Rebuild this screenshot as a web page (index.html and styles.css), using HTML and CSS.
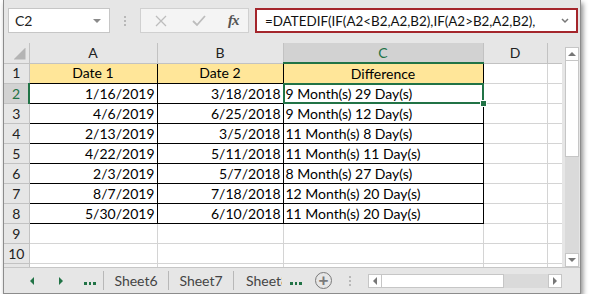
FILE: index.html
```html
<!DOCTYPE html>
<html>
<head>
<meta charset="utf-8">
<link rel="stylesheet" href="styles.css">
</head>
<body>
<div class="window">
  <div class="fbar">
    <div class="namebox"><span class="nb-text">C2</span><span class="nb-arrow"></span></div>
    <div class="vdots"><i></i><i></i><i></i></div>
    <div class="fbtns">
      <svg class="ic-x" width="12" height="12" viewBox="0 0 12 12"><path d="M1 1 L11 11 M11 1 L1 11" stroke="#bdbdbd" stroke-width="1.3" fill="none"/></svg>
      <svg class="ic-ok" width="14" height="12" viewBox="0 0 14 12"><path d="M1 6 L5 10 L13 1" stroke="#bdbdbd" stroke-width="1.8" fill="none"/></svg>
      <span class="fx">fx</span>
    </div>
    <div class="formula"><span class="f-text">=DATEDIF(IF(A2&lt;B2,A2,B2),IF(A2&gt;B2,A2,B2),</span><svg class="chev" width="8" height="6" viewBox="0 0 8 6"><path d="M1 1 L4 4 L7 1" stroke="#777" stroke-width="1.5" fill="none"/></svg></div>
  </div>
  <div class="sheet">
    <div class="gridwrap">
      <table class="grid">
        <colgroup><col class="c-rh"><col class="c-a"><col class="c-b"><col class="c-c"><col class="c-d"><col class="c-e"></colgroup>
        <tr class="hdr"><th class="corner"><span class="tri"></span></th><th>A</th><th>B</th><th class="hsel">C</th><th>D</th><th></th></tr>
        <tr><th class="rh">1</th><td class="d y ctr">Date 1</td><td class="d y ctr">Date 2</td><td class="d y ctr">Difference</td><td></td><td></td></tr>
        <tr><th class="rh rsel">2</th><td class="d r">1/16/2019</td><td class="d r">3/18/2018</td><td class="d sel">9 Month(s) 29 Day(s)<span class="handle"></span></td><td></td><td></td></tr>
        <tr><th class="rh">3</th><td class="d r">4/6/2019</td><td class="d r">6/25/2018</td><td class="d">9 Month(s) 12 Day(s)</td><td></td><td></td></tr>
        <tr><th class="rh">4</th><td class="d r">2/13/2019</td><td class="d r">3/5/2018</td><td class="d">11 Month(s) 8 Day(s)</td><td></td><td></td></tr>
        <tr><th class="rh">5</th><td class="d r">4/22/2019</td><td class="d r">5/11/2018</td><td class="d">11 Month(s) 11 Day(s)</td><td></td><td></td></tr>
        <tr><th class="rh">6</th><td class="d r">2/3/2019</td><td class="d r">5/7/2018</td><td class="d">8 Month(s) 27 Day(s)</td><td></td><td></td></tr>
        <tr><th class="rh">7</th><td class="d r">8/7/2019</td><td class="d r">7/18/2018</td><td class="d">12 Month(s) 20 Day(s)</td><td></td><td></td></tr>
        <tr><th class="rh">8</th><td class="d r">5/30/2019</td><td class="d r">6/10/2018</td><td class="d">11 Month(s) 20 Day(s)</td><td></td><td></td></tr>
        <tr><th class="rh">9</th><td></td><td></td><td></td><td></td><td></td></tr>
        <tr><th class="rh">10</th><td></td><td></td><td></td><td></td><td></td></tr>
        <tr><th class="rh"></th><td></td><td></td><td></td><td></td><td></td></tr>
      </table>
    </div>
    <div class="vscroll">
      <div class="sbtn up"><span class="t-up"></span></div>
      <div class="vthumb"></div>
      <div class="vtrack"></div>
      <div class="sbtn down"><span class="t-down"></span></div>
    </div>
  </div>
  <div class="tabbar">
    <div class="navgrp">
      <span class="nav-l"></span>
      <span class="nav-r"></span>
      <span class="gdots first"><i></i><i></i><i></i></span>
    </div>
    <div class="tabs">
      <span class="tab">Sheet6</span>
      <span class="tab">Sheet7</span>
      <span class="tab cut">Sheet8</span>
    </div>
    <div class="tail">
      <span class="gdots second"><i></i><i></i><i></i></span>
      <span class="plus">+</span>
      <span class="vdots small"><i></i><i></i><i></i></span>
    </div>
    <div class="hscroll">
      <div class="sbtn hl"><span class="t-left"></span></div>
      <div class="hthumb"></div>
      <div class="htrack"></div>
      <div class="sbtn hr"><span class="t-right"></span></div>
    </div>
  </div>
</div>
</body>
</html>
```

FILE: styles.css
```css
html, body { margin: 0; padding: 0; background: #ffffff; }
body { font-family: Lato, "Liberation Sans", sans-serif; }
.window {
  margin-left: 3px;
  width: 576px;
  height: 293px;
  background: #e6e6e6;
  border-left: 1px solid #8c8c8c;
  border-right: 1px solid #8c8c8c;
  border-bottom: 1px solid #8c8c8c;
  box-shadow: 2px 3px 5px rgba(0,0,0,0.45);
  display: flex;
  flex-direction: column;
}
.fbar {
  height: 43px;
  box-sizing: border-box;
  padding: 8px 1px 0 4px;
  display: flex;
  align-items: flex-start;
  flex: none;
}
.namebox {
  width: 102px; height: 25px; box-sizing: border-box;
  background: #fff; border: 1px solid #c6c6c6;
  display: flex; align-items: center; justify-content: space-between;
  padding: 0 8px 0 6px;
}
.nb-text { font-size: 14px; color: #222; }
.nb-arrow { width: 0; height: 0; border-left: 4px solid transparent; border-right: 4px solid transparent; border-top: 4px solid #8a8a8a; margin-top: 1px; }
.vdots { width: 30px; height: 25px; display: flex; flex-direction: column; align-items: center; justify-content: center; gap: 2px; flex: none; }
.vdots i { display: block; width: 2px; height: 2px; background: #b8b8b8; }
.fbtns {
  width: 109px; height: 25px; box-sizing: border-box;
  background: #f4f4f4; border: 1px solid #d0d0d0;
  display: flex; align-items: center; padding: 0 0 0 14px;
}
.ic-x { margin-right: 25px; }
.ic-ok { margin-right: 22px; }
.fx { font-family: "Liberation Serif", serif; font-style: italic; font-size: 15px; color: #555; font-weight: bold; letter-spacing: -1px; }
.formula {
  margin-left: 6px;
  width: 323px; height: 25px; box-sizing: border-box;
  background: #fff; border: 2px solid #a4262c;
  display: flex; align-items: center; justify-content: space-between;
  padding: 0 7px 0 8px;
}
.f-text { font-size: 13.4px; color: #111; white-space: nowrap; }
.sheet { height: 224px; display: flex; flex: none; overflow: hidden; }
.gridwrap { width: 558px; height: 224px; overflow: hidden; background: #fff; flex: none; }
.grid { border-collapse: collapse; table-layout: fixed; width: 607px; font-size: 14px; }
.c-rh { width: 25px; }
.c-a { width: 128px; }
.c-b { width: 126px; }
.c-c { width: 200px; }
.c-d { width: 64px; }
.c-e { width: 64px; }
.grid tr { height: 20px; }
.grid th, .grid td { height: 19px; padding: 0 2px; border: 1px solid #d4d4d4; white-space: nowrap; overflow: hidden; line-height: 18px; text-align: left; }
.grid th { background: #e6e6e6; font-weight: normal; color: #222; border-color: #c2c2c2; text-align: center; }
.hdr th { border-top: none; }
.grid tr > :first-child { border-left: none; }
.corner { position: relative; }
.tri { position: absolute; right: 3px; bottom: 3px; width: 12px; height: 12px; background: #b4b4b4; clip-path: polygon(100% 0, 100% 100%, 0 100%); }
.hsel { background: #d2d2d2 !important; color: #217346 !important; border-bottom: 2px solid #217346 !important; }
.rsel { background: #d2d2d2 !important; color: #217346 !important; border-right: 2px solid #217346 !important; }
.d { border: 1px solid #000 !important; color: #000; }
.y { background: #ffe699; }
.grid td.r { text-align: right; }
.grid td.ctr { text-align: center; }
.sel { position: relative; overflow: visible !important; }
.sel::before { content: ""; position: absolute; left: -1px; top: -1px; right: -1px; bottom: -1px; border: 2px solid #217346; }
.handle { position: absolute; right: -4px; bottom: -4px; width: 5px; height: 5px; background: #217346; border: 1px solid #fff; z-index: 2; }
.vscroll { width: 18px; height: 224px; display: flex; flex-direction: column; padding: 4px 0 0 3px; box-sizing: border-box; flex: none; }
.sbtn { width: 14px; height: 14px; box-sizing: border-box; background: #fff; border: 1px solid #c6c6c6; display: flex; align-items: center; justify-content: center; flex: none; }
.t-up { width: 0; height: 0; border-left: 4px solid transparent; border-right: 4px solid transparent; border-bottom: 4px solid #777; }
.t-down { width: 0; height: 0; border-left: 4px solid transparent; border-right: 4px solid transparent; border-top: 4px solid #777; }
.t-left { width: 0; height: 0; border-top: 4px solid transparent; border-bottom: 4px solid transparent; border-right: 4px solid #777; }
.t-right { width: 0; height: 0; border-top: 4px solid transparent; border-bottom: 4px solid transparent; border-left: 4px solid #777; }
.vthumb { width: 14px; height: 96px; box-sizing: border-box; background: #fff; border: 1px solid #c6c6c6; border-top: none; flex: none; }
.vtrack { width: 14px; flex: 1; background: #dadada; }
.tabbar { height: 26px; box-sizing: border-box; border-top: 1px solid #c6c6c6; display: flex; align-items: center; flex: none; font-size: 14px; color: #444; }
.tabbar > div { flex: none; display: flex; align-items: center; height: 25px; }
.navgrp { width: 99px; padding-left: 26px; box-sizing: border-box; }
.nav-l { width: 0; height: 0; border-top: 4px solid transparent; border-bottom: 4px solid transparent; border-right: 4px solid #217346; }
.nav-r { width: 0; height: 0; border-top: 4px solid transparent; border-bottom: 4px solid transparent; border-left: 4px solid #217346; margin-left: 25px; }
.gdots { display: flex; gap: 2px; width: 12px; padding-top: 6px; flex: none; }
.gdots i { display: block; width: 2.5px; height: 2.5px; background: #217346; }
.gdots.first { margin-left: 21px; }
.gdots.second { margin-left: 8px; }
.tabs { width: 179px; }
.tab { width: 65px; height: 19px; box-sizing: border-box; border-left: 1px solid #b8b8b8; display: flex; align-items: center; justify-content: center; flex: none; }
.tab.cut { width: 49px; justify-content: flex-start; padding-left: 12px; overflow: hidden; white-space: nowrap; }
.tail { width: 86px; }
.plus { margin-left: 13px; width: 17px; height: 17px; box-sizing: border-box; border: 1.3px solid #7a7a7a; border-radius: 50%; display: flex; align-items: center; justify-content: center; font-size: 17px; line-height: 1; color: #7a7a7a; font-family: "Liberation Sans", sans-serif; font-weight: bold; flex: none; }
.vdots.small { width: 36px; height: 20px; display: flex; }
.hscroll { width: 194px; height: 14px !important; }
.hthumb { width: 122px; height: 14px; box-sizing: border-box; background: #fff; border: 1px solid #c6c6c6; border-left: none; flex: none; }
.htrack { flex: 1; height: 14px; background: #dadada; }
```
